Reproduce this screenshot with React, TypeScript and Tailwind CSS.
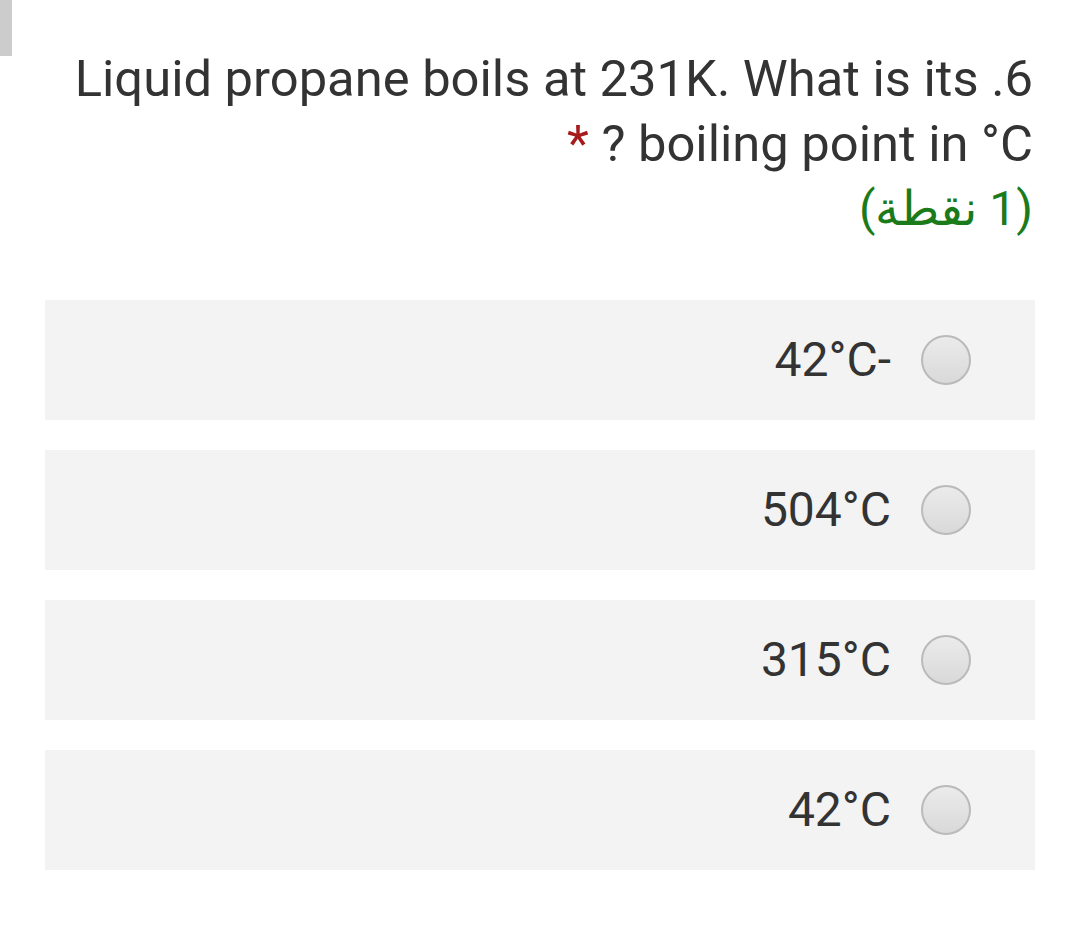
import React from 'react';

const options = ['42°C-', '504°C', '315°C', '42°C'];

export default function App() {
  return (
    <div className="relative w-[1080px] h-[925px] bg-white font-['Roboto',sans-serif] text-[#333333]">
      <div className="absolute left-0 top-0 w-[12px] h-[56px] bg-[#cccccc]" />
      <div className="pt-[46px] pr-[47px] text-right">
        <div className="text-[50.7px] leading-[65px]">Liquid propane boils at 231K. What is its .6</div>
        <div className="text-[50.7px] leading-[65px]">
          <span className="text-[#a61b1b]">*</span> ? boiling point in °C
        </div>
        <div dir="rtl" className="text-[48px] leading-[65px] text-[#1b7b1b] text-right">
          (1 نقطة)
        </div>
      </div>
      <div className="mt-[59px] ml-[45px] w-[990px] flex flex-col gap-[30px]">
        {options.map((o) => (
          <div key={o} className="h-[120px] bg-[#f3f3f3] flex items-center justify-end pr-[64px] gap-[30px]">
            <span className="text-[48px]">{o}</span>
            <span className="w-[50px] h-[50px] rounded-full border-2 border-[#bababa] bg-gradient-to-b from-[#ebebeb] to-[#d9d9d9]" />
          </div>
        ))}
      </div>
    </div>
  );
}
